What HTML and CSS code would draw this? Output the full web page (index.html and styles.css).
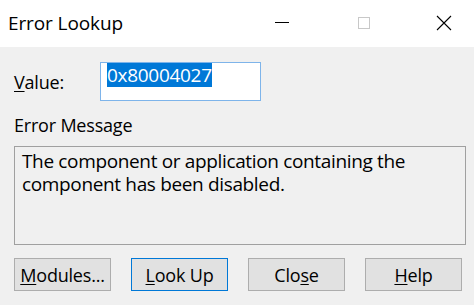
FILE: index.html
```html
<!DOCTYPE html>
<html>
<head>
<meta charset="utf-8">
<link rel="stylesheet" href="styles.css">
</head>
<body>
<div class="window">
  <div class="titlebar">
    <div class="title">Error Lookup</div>
    <div class="controls">
      <div class="ctl ctl-min"><svg width="16" height="16" viewBox="0 0 16 16"><line x1="1" y1="7.5" x2="15" y2="7.5" stroke="#000" stroke-width="1"/></svg></div>
      <div class="ctl ctl-max"><svg width="14" height="14" viewBox="0 0 14 14"><rect x="1.5" y="1.5" width="11" height="11" fill="none" stroke="#c8c8c8" stroke-width="1"/></svg></div>
      <div class="ctl ctl-close"><svg width="16" height="16" viewBox="0 0 16 16"><path d="M1 1 L15 15 M15 1 L1 15" stroke="#000" stroke-width="1.1" fill="none"/></svg></div>
    </div>
  </div>
  <div class="body">
    <div class="value-row">
      <label class="label"><u>V</u>alue:</label>
      <div class="edit"><span class="sel">0x80004027</span></div>
    </div>
    <div class="label msg-label">Error Message</div>
    <div class="message">The component or application containing the component has been disabled.</div>
    <div class="buttons">
      <div class="btn"><u>M</u>odules...</div>
      <div class="btn btn-default"><u>L</u>ook Up</div>
      <div class="btn">Clo<u>s</u>e</div>
      <div class="btn"><u>H</u>elp</div>
    </div>
  </div>
</div>
</body>
</html>
```
FILE: styles.css
```css
* { box-sizing: border-box; }
html, body { margin: 0; padding: 0; }
body {
  width: 474px;
  height: 305px;
  overflow: hidden;
  font-family: "Open Sans", "Noto Sans", "Liberation Sans", sans-serif;
  color: #000;
  background: #f0f0f0;
}
.window { width: 474px; height: 305px; display: flex; flex-direction: column; }
.titlebar {
  height: 47px;
  background: #fff;
  display: flex;
  align-items: center;
  justify-content: space-between;
  padding-left: 8px;
}
.title { font-size: 19px; letter-spacing: -0.1px; margin-top: -2px; }
.controls { display: flex; height: 100%; margin-top: -2px; }
.ctl { display: flex; align-items: center; justify-content: center; height: 100%; }
.ctl-min { width: 40px; margin-right: 42px; }
.ctl-max { width: 40px; margin-right: 40px; }
.ctl-close { width: 40px; margin-right: 10px; }
.body { flex: 1; padding: 15px 8px 0 14px; }
.value-row { display: flex; align-items: flex-start; height: 39px; }
.label { font-size: 18px; letter-spacing: -0.2px; }
.value-row .label { width: 86px; padding-top: 8px; }
.edit {
  width: 161px;
  height: 39px;
  border: 1px solid #7eb4ea;
  background: #fff;
  padding: 0 0 0 6px;
}
.sel {
  display: inline-block;
  background: #0078d7;
  color: #fff;
  font-size: 19px;
  line-height: 24px;
  letter-spacing: -0.3px;
}
.msg-label { margin-top: 11px; line-height: 26px; }
.message {
  margin-top: 8px;
  width: 452px;
  height: 99px;
  border: 1px solid #a0a0a0;
  padding: 3px 7px;
  font-size: 19px;
  line-height: 23px;
  letter-spacing: -0.35px;
}
.buttons { display: flex; gap: 20px; margin-top: 13px; }
.btn {
  width: 97px;
  height: 33px;
  background: #e1e1e1;
  border: 1px solid #adadad;
  font-size: 18px;
  letter-spacing: -0.2px;
  display: flex;
  align-items: center;
  justify-content: center;
}
.btn-default { border-color: #0078d7; }
u { text-decoration-thickness: 1px; text-underline-offset: 2px; }
```
